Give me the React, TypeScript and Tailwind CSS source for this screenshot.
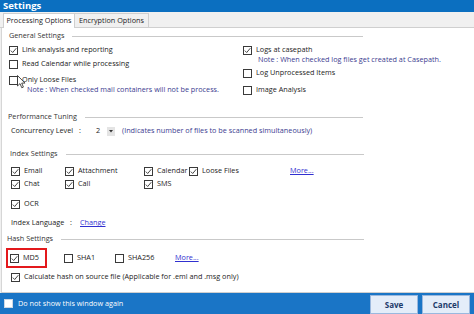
import React from 'react';

const FONT = "'Open Sans', 'Noto Sans', sans-serif";

function Box({ checked }: { checked?: boolean }) {
  return (
    <span className="w-[9px] h-[9px] shrink-0 border border-[#3a3a3a] bg-white flex items-center justify-center">
      {checked && (
        <svg width="7" height="7" viewBox="0 0 7 7">
          <path d="M0.8 3.6 L2.7 5.5 L6.3 1.2" fill="none" stroke="#333" strokeWidth="0.9" />
        </svg>
      )}
    </span>
  );
}

function Check({ label, checked, className = '' }: { label: string; checked?: boolean; className?: string }) {
  return (
    <div className={'flex items-center gap-[4px] h-[12px] ' + className}>
      <Box checked={checked} />
      <span className="text-[#222] whitespace-nowrap">{label}</span>
    </div>
  );
}

function Header({ title, short, className = '' }: { title: string; short?: boolean; className?: string }) {
  return (
    <div className={'flex items-center gap-[8px] ' + (short ? 'h-[10px] ' : 'h-[16px] ') + className}>
      <span className="text-[#333] whitespace-nowrap">{title}</span>
      <div className="flex-1 h-px bg-[#c9c9c9]" />
    </div>
  );
}

function Cursor() {
  return (
    <svg className="absolute left-[15px] top-[47px]" width="9" height="14" viewBox="0 0 9 14">
      <path d="M0.5 0.5 L0.5 11 L3 8.6 L4.8 12.8 L6.4 12.1 L4.7 8.1 L8 8.1 Z" fill="#fff" stroke="#222" strokeWidth="0.8" strokeLinejoin="round" />
    </svg>
  );
}

export default function App() {
  return (
    <div
      className="w-[474px] h-[314px] overflow-hidden flex flex-col bg-[#f0f0f0] text-[7.25px] leading-none relative"
      style={{ fontFamily: FONT }}
    >
      {/* Title bar */}
      <div className="h-[12px] bg-[#0b6fc0] flex items-center pl-[3px]">
        <span className="text-white font-bold text-[9.5px]">Settings</span>
      </div>

      {/* Tabs */}
      <div className="h-[16px] flex items-end pl-[3px] border-b border-[#cfcfcf]">
        <div className="h-[15px] w-[72px] bg-white border border-b-0 border-[#cfcfcf] flex items-center justify-center text-[#222] -mb-px">
          Processing Options
        </div>
        <div className="h-[15px] w-[74px] bg-[#f0f0f0] border border-l-0 border-[#cfcfcf] flex items-center justify-center text-[#222] -mb-px">
          Encryption Options
        </div>
      </div>

      {/* Content */}
      <div className="flex-1 bg-white ml-[1px] border-l border-[#d6d6d6] border-b border-b-[#cfcfcf] relative">
        <Header title="General Settings" className="ml-[7px] w-[354px]" />

        <div className="flex h-[54px]">
          <div className="w-[241px] pl-[7px] flex flex-col">
            <Check label="Link analysis and reporting" checked />
            <Check label="Read Calendar while processing" className="mt-[2px]" />
            <Check label="Only Loose Files" className="mt-[4px]" />
            <div className="h-[8px] flex items-center pl-[18px] text-[#3b3b8f]">
              Note : When checked mail containers will not be process.
            </div>
          </div>
          <div className="flex flex-col">
            <Check label="Logs at casepath" checked />
            <div className="h-[8px] flex items-center pl-[15px] text-[#3b3b8f]">
              Note : When checked log files get created at Casepath.
            </div>
            <Check label="Log Unprocessed Items" className="mt-[3px]" />
            <Check label="Image Analysis" className="mt-[5px]" />
          </div>
        </div>

        <Header title="Performance Tuning" className="ml-[6px] w-[355px] mt-[11px]" />
        <div className="h-[12px] flex items-center pl-[9px]">
          <span className="w-[68px] text-[#222]">Concurrency Level</span>
          <span className="w-[17px] text-[#222]">:</span>
          <span className="w-[11px] text-[#222]">2</span>
          <span className="w-[8px] h-[9px] bg-[#e4e4e4] flex items-center justify-center">
            <svg width="4" height="3" viewBox="0 0 4 3"><path d="M0 0 H4 L2 2.5 Z" fill="#333" /></svg>
          </span>
          <span className="ml-[7px] text-[#3b3b8f] whitespace-nowrap">
            (Indicates number of files to be scanned simultaneously)
          </span>
        </div>

        <Header title="Index Settings" className="ml-[8px] w-[354px] mt-[9px]" />
        <div className="flex items-center h-[12px] mt-[3px] pl-[9px]">
          <Check label="Email" checked className="w-[54px]" />
          <Check label="Attachment" checked className="w-[79px]" />
          <Check label="Calendar" checked className="w-[45px]" />
          <Check label="Loose Files" checked className="w-[101px]" />
          <a className="text-[#3030d0] underline">More...</a>
        </div>
        <div className="flex items-center h-[12px] mt-[1px] pl-[9px]">
          <Check label="Chat" checked className="w-[54px]" />
          <Check label="Call" checked className="w-[79px]" />
          <Check label="SMS" checked />
        </div>
        <div className="flex items-center h-[12px] mt-[8px] pl-[9px]">
          <Check label="OCR" checked />
        </div>
        <div className="flex items-center h-[12px] mt-[7px] pl-[9px]">
          <span className="w-[59px] text-[#222]">Index Language</span>
          <span className="w-[10px] text-[#222]">:</span>
          <a className="text-[#3030d0] underline">Change</a>
        </div>

        <Header title="Hash Settings" short className="ml-[5px] w-[357px] mt-[5px]" />
        <div className="flex items-center h-[20px] mt-[4px] pl-[4px]">
          <div className="w-[41px] h-[20px] border-2 border-[#e3191c] flex items-center pl-[2px]">
            <Check label="MD5" checked />
          </div>
          <Check label="SHA1" className="ml-[17px] w-[51px]" />
          <Check label="SHA256" className="w-[60px]" />
          <a className="text-[#3030d0] underline">More...</a>
        </div>
        <div className="flex items-center h-[12px] mt-[3px] pl-[9px]">
          <Check label="Calculate hash on source file (Applicable for .eml and .msg only)" checked />
        </div>

        <Cursor />
      </div>

      {/* Footer */}
      <div className="h-[21px] bg-[#1a75c6] flex items-center pl-[4px] pr-[4px]">
        <span className="w-[9px] h-[9px] bg-white border border-[#cfd8e3]" />
        <span className="ml-[5px] text-white">Do not show this window again</span>
        <div className="ml-auto flex gap-[4px] self-end">
          <button className="w-[48px] h-[19px] bg-[#e4edf9] border border-[#9ab8de] text-[#1c3a6a] font-bold text-[8px]">Save</button>
          <button className="w-[48px] h-[19px] bg-[#e4edf9] border border-[#9ab8de] text-[#1c3a6a] font-bold text-[8px]">Cancel</button>
        </div>
      </div>
    </div>
  );
}
